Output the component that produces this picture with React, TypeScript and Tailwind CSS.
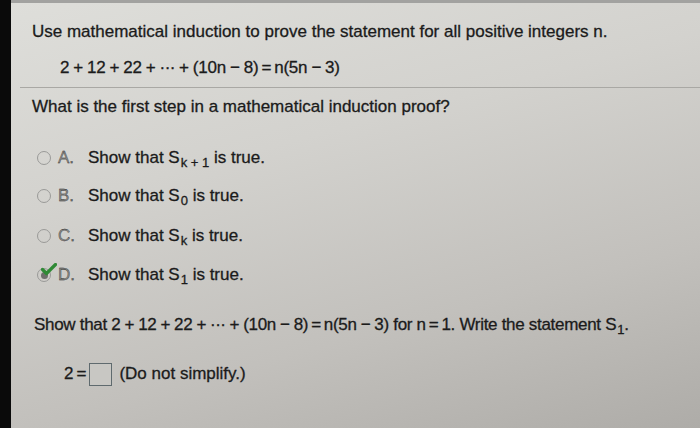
import React from "react";

function Radio({ selected = false }: { selected?: boolean }) {
  return (
    <div className="relative w-[14px] h-[14px] shrink-0">
      <div className="w-[14px] h-[14px] rounded-full border-[1.5px] border-[#9a9a98] flex items-center justify-center">
        {selected && <div className="w-[7px] h-[7px] rounded-full bg-[#6e6e6c]" />}
      </div>
      {selected && (
        <svg className="absolute left-[4px] top-[-5px]" width="16" height="13" viewBox="0 0 16 13">
          <path d="M1.5 6.5 L5.5 10.5 L14.5 1.5" fill="none" stroke="#2f8a35" strokeWidth="3.2" strokeLinecap="round" strokeLinejoin="round" />
        </svg>
      )}
    </div>
  );
}

function Sub({ children }: { children: React.ReactNode }) {
  return <sub className="text-[13px] relative top-[4px] align-baseline ml-[1px]">{children}</sub>;
}

function Option({ letter, children, selected = false, mt }: { letter: string; children: React.ReactNode; selected?: boolean; mt: string }) {
  return (
    <div className={`flex items-center h-[20px] pl-[6px] ${mt}`}>
      <Radio selected={selected} />
      <span className="ml-[7px] w-[30px] text-[#8a8a88]">{letter}</span>
      <span className="whitespace-pre">{children}</span>
    </div>
  );
}

function Eq() {
  return (
    <span>
      2<span className="mx-[4px]">+</span>12<span className="mx-[4px]">+</span>22<span className="mx-[4px]">+</span>
      <span className="tracking-[-0.5px]">···</span>
      <span className="mx-[4px]">+</span>(10n<span className="mx-[4px]">−</span>8)<span className="mx-[3px]">=</span>n(5n<span className="mx-[4px]">−</span>3)
    </span>
  );
}

export default function App() {
  return (
    <div className="w-[700px] h-[428px] flex overflow-hidden font-['Liberation_Sans',Arial,sans-serif] text-[17px] text-[#1b1b1b] [-webkit-text-stroke:0.3px_#1b1b1b]">
      <div className="w-[11px] shrink-0 bg-[#0a0a0a]" />
      <div className="flex-1 flex flex-col border-t-[3px] border-[#a2a2a0] bg-[linear-gradient(165deg,#dededa_0%,#d3d2ce_35%,#c2c0bc_70%,#aeaca8_100%)]">
        <div className="pl-[21px] pt-[19px] h-[39px] flex items-end">
          <span className="leading-[20px]">Use mathematical induction to prove the statement for all positive integers n.</span>
        </div>
        <div className="pl-[49px] mt-[16px] h-[20px] flex items-center tracking-[-0.2px]">
          <Eq />
        </div>
        <div className="ml-[9px] mt-[9px] h-[1px] bg-[#a9a8a4]" />
        <div className="pl-[21px] mt-[9px] h-[20px] flex items-center">
          What is the first step in a mathematical induction proof?
        </div>
        <div className="pl-[20px]">
          <Option letter="A." mt="mt-[31px]">
            Show that S<Sub>k + 1</Sub> is true.
          </Option>
          <Option letter="B." mt="mt-[18px]">
            Show that S<Sub>0</Sub> is true.
          </Option>
          <Option letter="C." mt="mt-[20px]">
            Show that S<Sub>k</Sub> is true.
          </Option>
          <Option letter="D." mt="mt-[19px]" selected>
            Show that S<Sub>1</Sub> is true.
          </Option>
        </div>
        <div className="pl-[23px] mt-[30px] h-[20px] flex items-center tracking-[-0.3px]">
          <span>
            Show that <Eq /> for n<span className="mx-[3px]">=</span>1. Write the statement S
            <Sub>1</Sub>.
          </span>
        </div>
        <div className="pl-[53px] mt-[29px] h-[20px] flex items-center">
          <span>2</span>
          <span className="ml-[3px]">=</span>
          <div className="ml-[3px] w-[23px] h-[23px] border border-[#5f6a6e] bg-[#c8c7c3]" />
          <span className="ml-[7px]">(Do not simplify.)</span>
        </div>
      </div>
    </div>
  );
}
